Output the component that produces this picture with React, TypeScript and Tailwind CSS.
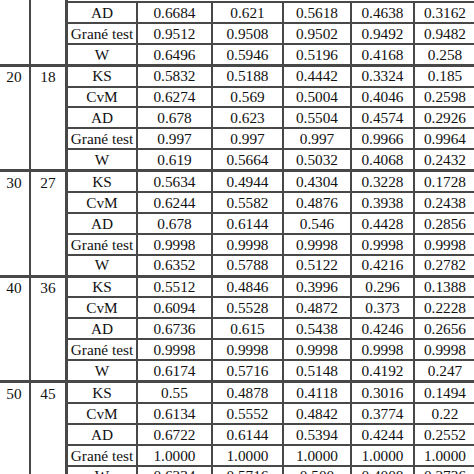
type Row = { test: string; values: string[] };

type Group = { n: string; m: string; rows: Row[] };

const groups: Group[] = [
  {
    n: "20",
    m: "18",
    rows: [
      { test: "KS", values: ["0.5832", "0.5188", "0.4442", "0.3324", "0.185"] },
      { test: "CvM", values: ["0.6274", "0.569", "0.5004", "0.4046", "0.2598"] },
      { test: "AD", values: ["0.678", "0.623", "0.5504", "0.4574", "0.2926"] },
      { test: "Grané test", values: ["0.997", "0.997", "0.997", "0.9966", "0.9964"] },
      { test: "W", values: ["0.619", "0.5664", "0.5032", "0.4068", "0.2432"] },
    ],
  },
  {
    n: "30",
    m: "27",
    rows: [
      { test: "KS", values: ["0.5634", "0.4944", "0.4304", "0.3228", "0.1728"] },
      { test: "CvM", values: ["0.6244", "0.5582", "0.4876", "0.3938", "0.2438"] },
      { test: "AD", values: ["0.678", "0.6144", "0.546", "0.4428", "0.2856"] },
      { test: "Grané test", values: ["0.9998", "0.9998", "0.9998", "0.9998", "0.9998"] },
      { test: "W", values: ["0.6352", "0.5788", "0.5122", "0.4216", "0.2782"] },
    ],
  },
  {
    n: "40",
    m: "36",
    rows: [
      { test: "KS", values: ["0.5512", "0.4846", "0.3996", "0.296", "0.1388"] },
      { test: "CvM", values: ["0.6094", "0.5528", "0.4872", "0.373", "0.2228"] },
      { test: "AD", values: ["0.6736", "0.615", "0.5438", "0.4246", "0.2656"] },
      { test: "Grané test", values: ["0.9998", "0.9998", "0.9998", "0.9998", "0.9998"] },
      { test: "W", values: ["0.6174", "0.5716", "0.5148", "0.4192", "0.247"] },
    ],
  },
  {
    n: "50",
    m: "45",
    rows: [
      { test: "KS", values: ["0.55", "0.4878", "0.4118", "0.3016", "0.1494"] },
      { test: "CvM", values: ["0.6134", "0.5552", "0.4842", "0.3774", "0.22"] },
      { test: "AD", values: ["0.6722", "0.6144", "0.5394", "0.4244", "0.2552"] },
      { test: "Grané test", values: ["1.0000", "1.0000", "1.0000", "1.0000", "1.0000"] },
      { test: "W", values: ["0.6234", "0.5716", "0.500", "0.4008", "0.2736"] },
    ],
  },
];

// rows of the group cut off at the top of the picture
const topRows: Row[] = [
  { test: "AD", values: ["0.6684", "0.621", "0.5618", "0.4638", "0.3162"] },
  { test: "Grané test", values: ["0.9512", "0.9508", "0.9502", "0.9492", "0.9482"] },
  { test: "W", values: ["0.6496", "0.5946", "0.5196", "0.4168", "0.258"] },
];

const valueWidths = ["w-[75px]", "w-[71px]", "w-[68px]", "w-[63px]", "w-[62px]"];

function DataRow({ row, last }: { row: Row; last: boolean }) {
  return (
    <div
      className={
        last
          ? "flex h-[18.9px]"
          : "flex h-[20.9px] border-b-2 border-[#484848]"
      }
    >
      <div className="flex w-[70px] shrink-0 items-center justify-center border-r-2 border-[#484848] whitespace-nowrap">
        {row.test}
      </div>
      {row.values.map((v, i) => (
        <div
          key={i}
          className={`flex shrink-0 items-center justify-center border-r-2 border-[#484848] ${valueWidths[i]}`}
        >
          {v}
        </div>
      ))}
    </div>
  );
}

function GroupBlock({
  n,
  m,
  rows,
  partial,
}: {
  n: string;
  m: string;
  rows: Row[];
  partial?: boolean;
}) {
  return (
    <div className="flex border-b-[3px] border-[#484848]">
      <div className="w-[32px] shrink-0 border-r-2 border-[#484848]">
        <div className="flex h-[20.9px] items-center justify-center">{n}</div>
      </div>
      <div className="w-[37px] shrink-0 border-r-[3px] border-[#484848]">
        <div className="flex h-[20.9px] items-center justify-center">{m}</div>
      </div>
      <div className="flex flex-col">
        {partial && <div className="h-[3px] border-b-2 border-[#484848]" />}
        {rows.map((r, i) => (
          <DataRow key={i} row={r} last={i === rows.length - 1} />
        ))}
      </div>
    </div>
  );
}

export default function App() {
  return (
    <div className="h-[474px] w-[474px] overflow-hidden bg-white font-['Liberation_Serif',serif] text-[15.3px] leading-none text-[#111]">
      <div className="-ml-px w-[481px]">
        <GroupBlock n="" m="" rows={topRows} partial />
        {groups.map((g) => (
          <GroupBlock key={g.n} n={g.n} m={g.m} rows={g.rows} />
        ))}
      </div>
    </div>
  );
}
